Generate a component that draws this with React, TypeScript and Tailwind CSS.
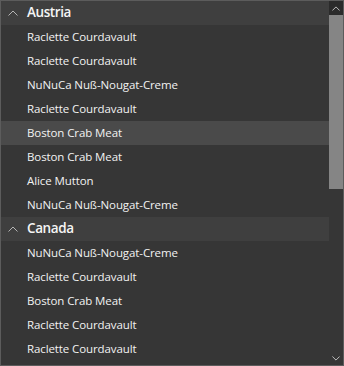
const groups = [
  {
    name: "Austria",
    items: [
      "Raclette Courdavault",
      "Raclette Courdavault",
      "NuNuCa Nuß-Nougat-Creme",
      "Raclette Courdavault",
      "Boston Crab Meat",
      "Boston Crab Meat",
      "Alice Mutton",
      "NuNuCa Nuß-Nougat-Creme",
    ],
  },
  {
    name: "Canada",
    items: [
      "NuNuCa Nuß-Nougat-Creme",
      "Raclette Courdavault",
      "Boston Crab Meat",
      "Raclette Courdavault",
      "Raclette Courdavault",
    ],
  },
];

const Chevron = ({ up, className }: { up: boolean; className: string }) => (
  <svg width="10" height="6" viewBox="0 0 10 6" className={className}>
    <path
      d={up ? "M0.5 5.5 L5 1 L9.5 5.5" : "M0.5 0.5 L5 5 L9.5 0.5"}
      fill="none"
      stroke="currentColor"
      strokeWidth="1"
    />
  </svg>
);

const App = () => {
  return (
    <div
      className="w-[344px] h-[366px] bg-[#363636] border border-[#5c5c5c] flex overflow-hidden"
      style={{ fontFamily: '"Open Sans", "Noto Sans", sans-serif' }}
    >
      <div className="flex-1 overflow-hidden">
        {groups.map((g) => (
          <div key={g.name}>
            <div className="h-6 bg-[#3f3f3f] flex items-center">
              <Chevron up className="ml-[7px] mr-[9px] text-[#b4b4b4]" />
              <span className="text-[13.5px] font-semibold tracking-[-0.4px] text-[#f5f5f5] leading-none">
                {g.name}
              </span>
            </div>
            {g.items.map((it, i) => (
              <div
                key={i}
                className={`h-6 flex items-center pl-[26px] text-[11.5px] tracking-[-0.1px] text-[#f2f2f2] ${
                  g.name === "Austria" && i === 4 ? "bg-[#4a4a4a]" : ""
                }`}
              >
                {it}
              </div>
            ))}
          </div>
        ))}
      </div>
      <div className="w-[14px] flex flex-col">
        <div className="h-[14px] bg-[#2b2b2b] flex items-center justify-center">
          <Chevron up className="w-[8px] h-[5px] text-[#e0e0e0]" />
        </div>
        <div className="h-[174px] bg-[#858585]" />
        <div className="flex-1" />
        <div className="h-[14px] flex items-center justify-center">
          <Chevron up={false} className="w-[8px] h-[5px] text-[#e0e0e0]" />
        </div>
      </div>
    </div>
  );
};

export default App;
